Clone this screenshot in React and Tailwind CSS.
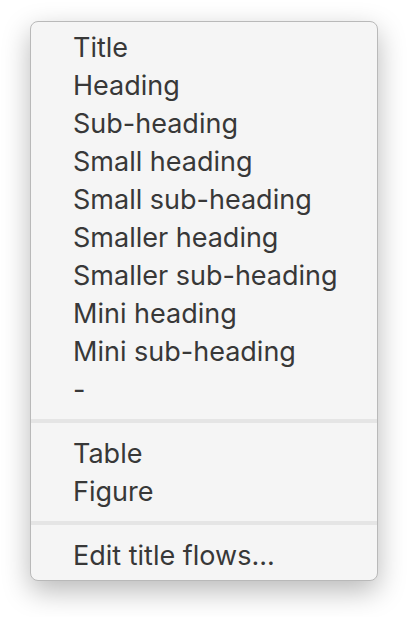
import React from 'react';

const groups = [
  ['Title', 'Heading', 'Sub-heading', 'Small heading', 'Small sub-heading', 'Smaller heading', 'Smaller sub-heading', 'Mini heading', 'Mini sub-heading', '-'],
  ['Table', 'Figure'],
  ['Edit title flows...'],
];

export default function App() {
  return (
    <div className="min-h-[617px] w-[407px] bg-white pt-[21px] pl-[30px] font-['Inter',sans-serif]">
      <div className="w-[348px] rounded-[8px] border border-[#b9b9b9] bg-[#f5f5f5] py-[6px] shadow-[0_10px_28px_rgba(0,0,0,0.28)]">
        {groups.map((items, gi) => (
          <div key={gi}>
            {gi > 0 && <div className="my-[11px] h-[4px] bg-[#e5e5e5]" />}
            {items.map((label) => (
              <div key={label} className="flex h-[38px] items-center pt-[2px] pl-[42px] text-[27px] text-[#383838]">
                {label}
              </div>
            ))}
          </div>
        ))}
      </div>
    </div>
  );
}
